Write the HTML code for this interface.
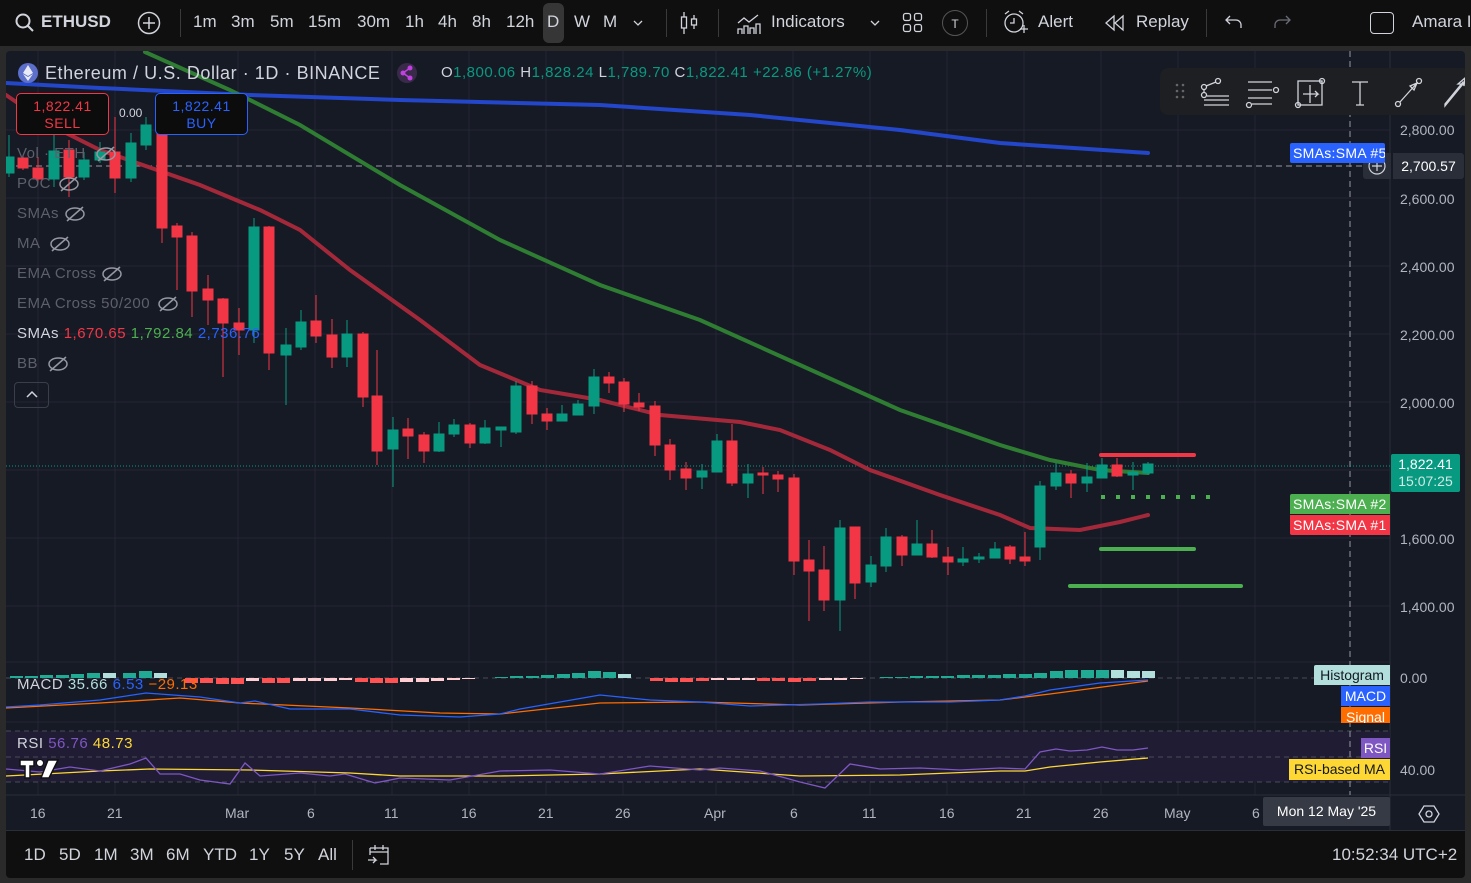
<!DOCTYPE html>
<html><head><meta charset="utf-8">
<style>
*{margin:0;padding:0;box-sizing:border-box}
body{width:1471px;height:883px;background:#2a2a2a;font-family:"Liberation Sans",sans-serif;overflow:hidden;position:relative;color:#d1d4dc}
.top{position:absolute;left:0;top:0;width:1471px;height:46px;background:#0f0f0f}
.t{position:absolute;font-size:17px;color:#d1d4dc;top:12px;white-space:nowrap}
.sep{position:absolute;top:9px;width:1px;height:28px;background:#3a3a3a}
.chart{position:absolute;left:6px;top:51px;width:1459px;height:779px;background:#161a25;border-radius:4px 4px 0 0;overflow:hidden}
.bot{position:absolute;left:6px;top:830px;width:1459px;height:48px;background:#0f0f0f;border-top:1px solid #2a2e39;border-radius:0 0 4px 4px}
.b{position:absolute;top:14px;font-size:17px;color:#d1d4dc}
svg text{font-family:"Liberation Sans",sans-serif}
</style></head><body>
<div class="top">
<svg style="position:absolute;left:14px;top:12px" width="22" height="22"><circle cx="9" cy="9" r="6.5" stroke="#d1d4dc" stroke-width="2" fill="none"/><line x1="14" y1="14" x2="19" y2="19" stroke="#d1d4dc" stroke-width="2"/></svg>
<span class="t" style="left:41px;font-weight:bold">ETHUSD</span>
<svg style="position:absolute;left:137px;top:11px" width="24" height="24"><circle cx="12" cy="12" r="10.5" stroke="#d1d4dc" stroke-width="1.5" fill="none"/><path d="M12 6v12M6 12h12" stroke="#d1d4dc" stroke-width="1.5"/></svg>
<div class="sep" style="left:180px"></div>
<span class="t" style="left:193px">1m</span><span class="t" style="left:231px">3m</span><span class="t" style="left:270px">5m</span><span class="t" style="left:308px">15m</span><span class="t" style="left:357px">30m</span><span class="t" style="left:405px">1h</span><span class="t" style="left:438px">4h</span><span class="t" style="left:472px">8h</span><span class="t" style="left:506px">12h</span>
<div style="position:absolute;left:543px;top:3px;width:21px;height:40px;background:#363636;border-radius:6px"></div>
<span class="t" style="left:547px">D</span><span class="t" style="left:574px">W</span><span class="t" style="left:603px">M</span>
<svg style="position:absolute;left:632px;top:18px" width="12" height="10"><path d="M2 3l4 4 4-4" stroke="#d1d4dc" stroke-width="1.3" fill="none"/></svg>
<div class="sep" style="left:666px"></div>
<svg style="position:absolute;left:678px;top:10px" width="22" height="26"><path d="M6 2v22M16 5v14" stroke="#d1d4dc" stroke-width="1.3"/><rect x="3.5" y="7" width="5" height="11" fill="#0f0f0f" stroke="#d1d4dc" stroke-width="1.3"/><rect x="13.5" y="9" width="5" height="6" fill="#0f0f0f" stroke="#d1d4dc" stroke-width="1.3"/></svg>
<div class="sep" style="left:718px"></div>
<svg style="position:absolute;left:736px;top:10px" width="26" height="26"><path d="M2 13l6-5 5 4 9-7" stroke="#d1d4dc" stroke-width="1.3" fill="none"/><path d="M2 24V19h4v5M8 24v-8h4v8M14 24v-6h4v6M20 24V14h4v10" stroke="#d1d4dc" stroke-width="1.3" fill="none"/></svg>
<span class="t" style="left:771px">Indicators</span>
<svg style="position:absolute;left:869px;top:18px" width="12" height="10"><path d="M2 3l4 4 4-4" stroke="#d1d4dc" stroke-width="1.3" fill="none"/></svg>
<svg style="position:absolute;left:902px;top:12px" width="22" height="22"><rect x="1.5" y="1.5" width="7" height="7" rx="2" stroke="#d1d4dc" fill="none" stroke-width="1.3"/><rect x="12.5" y="1.5" width="7" height="7" rx="2" stroke="#d1d4dc" fill="none" stroke-width="1.3"/><rect x="1.5" y="12.5" width="7" height="7" rx="2" stroke="#d1d4dc" fill="none" stroke-width="1.3"/><rect x="12.5" y="12.5" width="7" height="7" rx="2" stroke="#d1d4dc" fill="none" stroke-width="1.3"/></svg>
<svg style="position:absolute;left:941px;top:9px" width="28" height="28"><circle cx="14" cy="14" r="12.5" stroke="#555" fill="none"/><text x="14" y="19" font-size="12" fill="#d1d4dc" text-anchor="middle">T</text></svg>
<div class="sep" style="left:986px"></div>
<svg style="position:absolute;left:1002px;top:9px" width="28" height="28"><circle cx="12" cy="14" r="9" stroke="#d1d4dc" stroke-width="1.3" fill="none"/><path d="M12 9v5h-4M3 5l4-3M21 5l-4-3M18 20h8M22 16v8" stroke="#d1d4dc" stroke-width="1.3" fill="none"/></svg>
<span class="t" style="left:1038px">Alert</span>
<svg style="position:absolute;left:1103px;top:13px" width="24" height="20"><path d="M11 3L3 10l8 7zM20 3l-8 7 8 7z" stroke="#d1d4dc" stroke-width="1.3" fill="none"/></svg>
<span class="t" style="left:1136px">Replay</span>
<div class="sep" style="left:1206px"></div>
<svg style="position:absolute;left:1224px;top:13px" width="20" height="18"><path d="M6 3L2 7l4 4M2 7h10a5 5 0 0 1 5 5v3" stroke="#d1d4dc" stroke-width="1.3" fill="none"/></svg>
<svg style="position:absolute;left:1272px;top:13px" width="20" height="18"><path d="M14 3l4 4-4 4M18 7H8a5 5 0 0 0-5 5v3" stroke="#6a6d78" stroke-width="1.3" fill="none"/></svg>
<div style="position:absolute;left:1370px;top:12px;width:24px;height:22px;border:1.5px solid #d1d4dc;border-radius:4px"></div>
<span class="t" style="left:1412px">Amara I</span>
</div>

<div class="chart">
<svg width="1459" height="779" viewBox="6 51 1459 779" style="position:absolute;left:0;top:0">
<g stroke="#242733" stroke-width="1">
<path d="M6 130H1390M6 198H1390M6 266H1390M6 334H1390M6 402H1390M6 470H1390M6 538H1390M6 606H1390"/>
<path d="M38 51V795M115 51V795M238 51V795M315 51V795M392 51V795M469 51V795M546 51V795M623 51V795M716 51V795M793 51V795M870 51V795M947 51V795M1024 51V795M1101 51V795M1178 51V795M1255 51V795"/>
<path d="M6 662H1390M6 722H1390"/>
</g>
<line x1="1390" y1="51" x2="1390" y2="830" stroke="#2a2e39"/>
<line x1="6" y1="795" x2="1465" y2="795" stroke="#2a2e39"/>
<rect x="6" y="731" width="1384" height="51" fill="#1f1c33"/>
<g stroke="#4a4c58" stroke-dasharray="5 4"><path d="M6 731H1390M6 757H1390M6 782H1390"/></g>
<g stroke="#9598a1" stroke-dasharray="6 4" stroke-width="1"><path d="M6 166H1390M1350 51V795"/></g>
<line x1="6" y1="466" x2="1390" y2="466" stroke="#089981" stroke-dasharray="1 2"/>
<line x1="6" y1="678" x2="1390" y2="678" stroke="#4a4c58" stroke-dasharray="5 4"/>
<polyline fill="none" stroke="#2446c8" stroke-width="4" stroke-linecap="round" points="6,83 100,88 250,95 400,100 600,105 750,115 900,130 1000,143 1148,153"/>
<polyline fill="none" stroke="#2e7d32" stroke-width="4" stroke-linecap="round" points="145,52 230,90 300,125 400,185 500,240 600,285 700,320 800,365 900,410 1000,445 1050,460 1100,470 1148,473"/>
<polyline fill="none" stroke="#a3293a" stroke-width="4" stroke-linecap="round" points="6,95 50,125 100,150 200,185 260,210 300,230 350,270 420,320 480,365 540,390 600,400 660,415 740,422 780,430 830,450 870,470 940,495 1000,515 1030,528 1080,530 1120,522 1148,515"/>
<g stroke-width="1">
<g fill="#089981" stroke="#089981">
<path d="M9 135V177M54 135V187M84 152V180M100 142V163M131 133V182M146 117V150M254 218V343M286 328V405M301 310V350M347 320V367M393 417V487M439 422V452M454 419V437M485 420V444M501 427V447M516 381V434M562 405V421M578 400V415M594 369V414M702 464V489M717 434V472M748 464V498M840 520V631M871 556V587M886 528V572M917 520V555M963 547V566M979 553V563M995 542V558M1040 481V560M1056 463V490M1087 463V492M1102 458V478M1133 462V490M1148 462V475"/>
<rect x="4" y="157" width="10" height="16"/><rect x="49" y="151" width="10" height="28"/><rect x="79" y="160" width="10" height="17"/><rect x="95" y="152" width="10" height="8"/><rect x="126" y="143" width="10" height="35"/><rect x="141" y="125" width="10" height="20"/><rect x="249" y="227" width="10" height="103"/><rect x="281" y="345" width="10" height="10"/><rect x="296" y="322" width="10" height="25"/><rect x="342" y="334" width="10" height="23"/><rect x="388" y="430" width="10" height="19"/><rect x="434" y="434" width="10" height="17"/><rect x="449" y="425" width="10" height="9"/><rect x="480" y="428" width="10" height="15"/><rect x="496" y="427" width="10" height="3"/><rect x="511" y="386" width="10" height="46"/><rect x="557" y="414" width="10" height="7"/><rect x="573" y="404" width="10" height="11"/><rect x="589" y="377" width="10" height="29"/><rect x="697" y="471" width="10" height="6"/><rect x="712" y="441" width="10" height="31"/><rect x="743" y="474" width="10" height="9"/><rect x="835" y="528" width="10" height="72"/><rect x="866" y="565" width="10" height="17"/><rect x="881" y="537" width="10" height="29"/><rect x="912" y="544" width="10" height="11"/><rect x="958" y="559" width="10" height="3"/><rect x="974" y="557" width="10" height="2"/><rect x="990" y="549" width="10" height="9"/><rect x="1035" y="486" width="10" height="61"/><rect x="1051" y="473" width="10" height="13"/><rect x="1082" y="477" width="10" height="6"/><rect x="1097" y="465" width="10" height="13"/><rect x="1128" y="472" width="10" height="3"/><rect x="1143" y="464" width="10" height="9"/>
</g>
<g fill="#f23645" stroke="#f23645">
<path d="M23 155V170M38 157V183M69 140V197M115 117V193M162 120V243M177 223V290M192 232V317M208 275V325M223 298V377M239 308V355M269 226V370M316 295V343M332 319V368M363 332V407M377 350V465M408 418V459M424 432V463M470 423V448M532 381V424M547 408V430M609 372V393M624 378V412M639 393V411M655 401V456M670 439V480M686 462V490M732 424V486M763 467V494M778 471V492M794 474V575M809 540V621M824 546V611M855 527V599M902 535V566M932 530V558M948 547V575M1010 545V564M1025 532V566M1071 470V498M1117 458V477"/>
<rect x="18" y="158" width="10" height="10"/><rect x="33" y="168" width="10" height="11"/><rect x="64" y="150" width="10" height="27"/><rect x="110" y="152" width="10" height="26"/><rect x="157" y="125" width="10" height="103"/><rect x="172" y="226" width="10" height="11"/><rect x="187" y="236" width="10" height="55"/><rect x="203" y="289" width="10" height="11"/><rect x="218" y="299" width="10" height="24"/><rect x="234" y="323" width="10" height="7"/><rect x="264" y="227" width="10" height="126"/><rect x="311" y="321" width="10" height="15"/><rect x="327" y="335" width="10" height="22"/><rect x="358" y="334" width="10" height="63"/><rect x="372" y="396" width="10" height="55"/><rect x="403" y="429" width="10" height="7"/><rect x="419" y="435" width="10" height="16"/><rect x="465" y="425" width="10" height="18"/><rect x="527" y="386" width="10" height="28"/><rect x="542" y="414" width="10" height="7"/><rect x="604" y="377" width="10" height="6"/><rect x="619" y="382" width="10" height="22"/><rect x="634" y="403" width="10" height="4"/><rect x="650" y="406" width="10" height="39"/><rect x="665" y="445" width="10" height="25"/><rect x="681" y="469" width="10" height="9"/><rect x="727" y="441" width="10" height="42"/><rect x="758" y="473" width="10" height="2"/><rect x="773" y="475" width="10" height="4"/><rect x="789" y="478" width="10" height="83"/><rect x="804" y="560" width="10" height="11"/><rect x="819" y="570" width="10" height="30"/><rect x="850" y="527" width="10" height="56"/><rect x="897" y="537" width="10" height="18"/><rect x="927" y="544" width="10" height="13"/><rect x="943" y="557" width="10" height="5"/><rect x="1005" y="547" width="10" height="12"/><rect x="1020" y="557" width="10" height="4"/><rect x="1066" y="474" width="10" height="9"/><rect x="1112" y="465" width="10" height="11"/>
</g></g>
<g stroke-width="4" stroke-linecap="round">
<line x1="1101" y1="455" x2="1194" y2="455" stroke="#f23645"/>
<line x1="1101" y1="497" x2="1210" y2="497" stroke="#4caf50" stroke-dasharray="4 11" stroke-linecap="butt"/>
<line x1="1101" y1="549" x2="1194" y2="549" stroke="#4caf50"/>
<line x1="1070" y1="586" x2="1241" y2="586" stroke="#4caf50"/>
</g>
<g fill="#22ab94">
<rect x="10" y="676" width="13" height="2"/><rect x="25" y="676" width="13" height="2"/><rect x="40" y="675" width="13" height="3"/><rect x="56" y="675" width="13" height="3"/><rect x="71" y="674" width="13" height="4"/><rect x="87" y="673" width="13" height="5"/><rect x="123" y="673" width="13" height="5"/><rect x="139" y="671" width="13" height="7"/>
<rect x="495" y="677" width="13" height="1"/><rect x="510" y="676" width="13" height="2"/><rect x="526" y="676" width="13" height="2"/><rect x="541" y="675" width="13" height="3"/><rect x="557" y="674" width="13" height="4"/><rect x="572" y="673" width="13" height="5"/><rect x="588" y="671" width="13" height="7"/><rect x="603" y="672" width="13" height="6"/>
<rect x="880" y="677" width="13" height="1"/><rect x="895" y="677" width="13" height="1"/><rect x="910" y="676" width="13" height="2"/><rect x="926" y="676" width="13" height="2"/><rect x="941" y="676" width="13" height="2"/><rect x="957" y="675" width="13" height="3"/><rect x="972" y="675" width="13" height="3"/><rect x="988" y="675" width="13" height="3"/><rect x="1003" y="674" width="13" height="4"/><rect x="1019" y="674" width="13" height="4"/><rect x="1034" y="673" width="13" height="5"/><rect x="1050" y="671" width="13" height="7"/><rect x="1065" y="670" width="13" height="8"/><rect x="1081" y="670" width="13" height="8"/><rect x="1096" y="670" width="13" height="8"/>
</g>
<g fill="#b2dfdb"><rect x="103" y="673" width="13" height="5"/><rect x="154" y="673" width="13" height="5"/><rect x="1111" y="670" width="13" height="8"/><rect x="1127" y="671" width="13" height="7"/><rect x="1142" y="671" width="13" height="7"/><rect x="618" y="674" width="13" height="4"/></g>
<g fill="#ff5252"><rect x="185" y="678" width="13" height="5"/><rect x="200" y="678" width="13" height="5"/><rect x="216" y="678" width="13" height="6"/><rect x="231" y="678" width="13" height="6"/><rect x="262" y="678" width="13" height="5"/><rect x="277" y="678" width="13" height="5"/><rect x="355" y="678" width="13" height="4"/><rect x="370" y="678" width="13" height="5"/><rect x="385" y="678" width="13" height="5"/><rect x="650" y="678" width="13" height="3"/><rect x="665" y="678" width="13" height="4"/><rect x="680" y="678" width="13" height="4"/><rect x="696" y="678" width="13" height="3"/><rect x="757" y="678" width="13" height="3"/><rect x="772" y="678" width="13" height="3"/><rect x="788" y="678" width="13" height="4"/><rect x="803" y="678" width="13" height="3"/></g>
<g fill="#ffcdd2"><rect x="246" y="678" width="13" height="3"/><rect x="293" y="678" width="13" height="3"/><rect x="308" y="678" width="13" height="3"/><rect x="324" y="678" width="13" height="3"/><rect x="339" y="678" width="13" height="2"/><rect x="400" y="678" width="13" height="4"/><rect x="416" y="678" width="13" height="4"/><rect x="431" y="678" width="13" height="3"/><rect x="447" y="678" width="13" height="2"/><rect x="462" y="678" width="13" height="1"/><rect x="711" y="678" width="13" height="2"/><rect x="727" y="678" width="13" height="2"/><rect x="742" y="678" width="13" height="2"/><rect x="819" y="678" width="13" height="2"/><rect x="834" y="678" width="13" height="2"/><rect x="850" y="678" width="13" height="1"/></g>
<polyline fill="none" stroke="#ff6d00" stroke-width="1.3" points="6,708 100,703 180,698 240,703 350,708 440,713 500,714 600,703 700,702 800,705 900,702 1000,700 1050,694 1148,681"/>
<polyline fill="none" stroke="#2962ff" stroke-width="1.3" points="6,707 40,705 100,700 146,693 200,697 240,703 255,701 290,709 350,709 400,715 460,717 500,714 520,709 600,695 650,700 700,702 750,706 820,704 870,702 950,702 1000,700 1025,696 1050,690 1100,683 1148,680"/>
<polyline fill="none" stroke="#fdd835" stroke-width="1.3" points="6,776 100,771 150,769 250,770 350,773 400,776 500,776 600,774 700,769 800,776 900,775 1000,771 1025,771 1050,767 1100,762 1148,758"/>
<polyline fill="none" stroke="#7e57c2" stroke-width="1.3" points="6,769 40,772 70,767 100,771 130,764 146,758 160,774 180,774 200,780 230,784 245,763 260,776 300,773 330,776 345,774 375,783 400,778 450,780 500,771 550,770 600,774 650,766 700,770 720,768 760,771 800,782 825,788 850,764 880,769 920,768 960,770 1000,768 1025,769 1040,752 1056,749 1070,751 1087,750 1102,747 1117,750 1133,750 1148,748"/>
<g transform="translate(20,758)"><path d="M0 2h14v6h-4v12H5V8H0z" fill="#fff" stroke="#111" stroke-width="1.5"/><circle cx="20" cy="5" r="3.5" fill="#fff" stroke="#111" stroke-width="1"/><path d="M28 2h10l-9 18h-8z" fill="#fff" stroke="#111" stroke-width="1.5"/></g>
</svg>

<svg style="position:absolute;left:11px;top:11px" width="22" height="22"><circle cx="11" cy="11" r="10" fill="#5c6fcb"/><path d="M11 3l-5 8 5 3 5-3zM6 12l5 7 5-7-5 3z" fill="#e8eaf6"/></svg>
<div style="position:absolute;left:39px;top:12px;font-size:18px;color:#d1d4dc;letter-spacing:0.55px;white-space:nowrap">Ethereum / U.S. Dollar · 1D · BINANCE</div>
<svg style="position:absolute;left:390px;top:11px" width="22" height="22"><circle cx="11" cy="11" r="10" fill="#3a2a4a"/><circle cx="7" cy="11" r="2.5" fill="#c040e0"/><circle cx="14" cy="6" r="2.5" fill="#c040e0"/><circle cx="14" cy="16" r="2.5" fill="#c040e0"/><path d="M7 11l7-5M7 11l7 5" stroke="#c040e0" stroke-width="1.5"/></svg>
<div style="position:absolute;left:435px;top:13px;font-size:15px;letter-spacing:0.5px;color:#089981;white-space:nowrap"><span style="color:#d1d4dc">O</span>1,800.06 <span style="color:#d1d4dc">H</span>1,828.24 <span style="color:#d1d4dc">L</span>1,789.70 <span style="color:#d1d4dc">C</span>1,822.41 +22.86 (+1.27%)</div>
<div style="position:absolute;left:10px;top:42px;width:93px;height:42px;background:#0c0c0c;border:1.3px solid #f23645;border-radius:5px;color:#f23645;text-align:center;font-size:14px;line-height:17px;padding-top:4px;letter-spacing:0.5px">1,822.41<br>SELL</div>
<div style="position:absolute;left:113px;top:55px;font-size:12px;color:#d1d4dc">0.00</div>
<div style="position:absolute;left:149px;top:42px;width:93px;height:42px;background:#0c0c0c;border:1.3px solid #2962ff;border-radius:5px;color:#2962ff;text-align:center;font-size:14px;line-height:17px;padding-top:4px;letter-spacing:0.5px">1,822.41<br>BUY</div>
<div style="position:absolute;left:11px;top:88px;font-size:15px;letter-spacing:0.5px;color:#5d606b;line-height:30px;white-space:nowrap">Vol · ETH<br>POC<br>SMAs<br>MA<br>EMA Cross<br>EMA Cross 50/200<br><span style="color:#d1d4dc">SMAs</span> <span style="color:#f23645">1,670.65</span> <span style="color:#4caf50">1,792.84</span> <span style="color:#2962ff">2,736.76</span><br>BB</div>
<svg style="position:absolute;left:0;top:88px" width="180" height="240" fill="none" stroke="#9598a1" stroke-width="1.5">
<g><ellipse cx="100" cy="15" rx="9" ry="6"/><path d="M92 22l16-14"/></g>
<g><ellipse cx="63" cy="45" rx="9" ry="6"/><path d="M55 52l16-14"/></g>
<g><ellipse cx="69" cy="75" rx="9" ry="6"/><path d="M61 82l16-14"/></g>
<g><ellipse cx="54" cy="105" rx="9" ry="6"/><path d="M46 112l16-14"/></g>
<g><ellipse cx="106" cy="135" rx="9" ry="6"/><path d="M98 142l16-14"/></g>
<g><ellipse cx="162" cy="165" rx="9" ry="6"/><path d="M154 172l16-14"/></g>
<g><ellipse cx="52" cy="225" rx="9" ry="6"/><path d="M44 232l16-14"/></g>
</svg>
<div style="position:absolute;left:8px;top:331px;width:35px;height:26px;border:1px solid #3a3e4a;border-radius:4px"></div>
<svg style="position:absolute;left:19px;top:339px" width="14" height="10"><path d="M2 7l5-5 5 5" stroke="#d1d4dc" stroke-width="1.5" fill="none"/></svg>

<div style="position:absolute;left:11px;top:625px;font-size:15px;letter-spacing:0.5px;color:#d1d4dc;white-space:nowrap">MACD <span style="color:#b2dfdb">35.66</span> <span style="color:#2962ff">6.53</span> <span style="color:#ff6d00">−29.13</span></div>
<div style="position:absolute;left:11px;top:684px;font-size:15px;letter-spacing:0.5px;color:#d1d4dc;white-space:nowrap">RSI <span style="color:#7e57c2">56.76</span> <span style="color:#fdd835">48.73</span></div>

<div style="position:absolute;left:1154px;top:17px;width:310px;height:47px;background:#1e1f22;border-radius:8px"></div>
<svg style="position:absolute;left:1154px;top:17px" width="310" height="47" fill="none" stroke="#d1d4dc" stroke-width="1.3">
<g fill="#666" stroke="none"><circle cx="17" cy="17" r="1.3"/><circle cx="23" cy="17" r="1.3"/><circle cx="17" cy="23" r="1.3"/><circle cx="23" cy="23" r="1.3"/><circle cx="17" cy="29" r="1.3"/><circle cx="23" cy="29" r="1.3"/></g>
<circle cx="44" cy="19" r="2.5"/><circle cx="58" cy="13" r="2.5"/><circle cx="44" cy="27" r="2.5"/><path d="M46 18l10-4M44 21v4M47 28h22M44 32h25M44 37h25"/>
<path d="M88 14h24M88 22h24M88 30h24M92 36h20"/><circle cx="116" cy="22" r="2.5"/><circle cx="89" cy="37" r="2.5"/>
<rect x="138" y="13" width="24" height="24"/><circle cx="162" cy="13" r="2.5"/><circle cx="138" cy="37" r="2.5"/><path d="M150 17v18M143 26h15l-3-3M155 29l3-3"/>
<path d="M192 14h16M200 14v23M196 37h8"/>
<circle cx="238" cy="36" r="2.5"/><circle cx="259" cy="13" r="2.5"/><path d="M240 34l17-19M257 15l-3 7-4-4z"/>
<path d="M285 38l18-22-5 0 7-6-1 8 -1-4-18 22z"/>
</svg>

<div style="position:absolute;left:1394px;top:72px;font-size:14px;color:#b2b5be;line-height:1;white-space:nowrap">2,800.00</div>
<div style="position:absolute;left:1394px;top:140px;font-size:14px;color:#b2b5be">2,600.00</div>
<div style="position:absolute;left:1394px;top:208px;font-size:14px;color:#b2b5be">2,400.00</div>
<div style="position:absolute;left:1394px;top:276px;font-size:14px;color:#b2b5be">2,200.00</div>
<div style="position:absolute;left:1394px;top:344px;font-size:14px;color:#b2b5be">2,000.00</div>
<div style="position:absolute;left:1394px;top:480px;font-size:14px;color:#b2b5be">1,600.00</div>
<div style="position:absolute;left:1394px;top:548px;font-size:14px;color:#b2b5be">1,400.00</div>
<div style="position:absolute;left:1394px;top:619px;font-size:14px;color:#b2b5be">0.00</div>
<div style="position:absolute;left:1394px;top:711px;font-size:14px;color:#b2b5be">40.00</div>
<div style="position:absolute;left:1357px;top:102px;width:28px;height:26px;background:#2a2e39;border-radius:3px 0 0 3px"></div>
<svg style="position:absolute;left:1361px;top:105px" width="20" height="20"><circle cx="10" cy="10" r="8" stroke="#d1d4dc" fill="none" stroke-width="1.2"/><path d="M10 5v10M5 10h10" stroke="#d1d4dc" stroke-width="1.2"/></svg>
<div style="position:absolute;left:1387px;top:102px;width:71px;height:26px;background:#2a2e39;border-radius:0 3px 3px 0;color:#fff;font-size:14px;text-align:center;line-height:26px">2,700.57</div>
<div style="position:absolute;left:1284px;top:92px;width:95px;height:20px;background:#2962ff;color:#fff;font-size:14px;line-height:20px;padding-left:3px;border-radius:2px;overflow:hidden;white-space:nowrap;letter-spacing:0.3px">SMAs:SMA #5</div>
<div style="position:absolute;left:1385px;top:403px;width:69px;height:38px;background:#089981;border-radius:2px;color:#fff;font-size:14px;text-align:center;line-height:17px;padding-top:2px">1,822.41<br><span style="color:#cfe9e4">15:07:25</span></div>
<div style="position:absolute;left:1284px;top:443px;width:100px;height:20px;background:#4caf50;color:#fff;font-size:14px;line-height:20px;padding-left:3px;border-radius:2px 0 0 0;letter-spacing:0.3px">SMAs:SMA #2</div>
<div style="position:absolute;left:1284px;top:464px;width:100px;height:20px;background:#f23645;color:#fff;font-size:14px;line-height:20px;padding-left:3px;border-radius:0 0 0 2px;letter-spacing:0.3px">SMAs:SMA #1</div>
<div style="position:absolute;left:1308px;top:614px;width:76px;height:20px;background:#b2dfdb;color:#131722;font-size:14px;line-height:20px;text-align:center;border-radius:2px 0 0 0">Histogram</div>
<div style="position:absolute;left:1335px;top:635px;width:49px;height:20px;background:#2962ff;color:#fff;font-size:14px;line-height:20px;text-align:center">MACD</div>
<div style="position:absolute;left:1335px;top:656px;width:49px;height:16px;background:#ff6d00;color:#fff;font-size:14px;line-height:20px;text-align:center;overflow:hidden">Signal</div>
<div style="position:absolute;left:1355px;top:687px;width:29px;height:20px;background:#7e57c2;color:#fff;font-size:14px;line-height:20px;text-align:center">RSI</div>
<div style="position:absolute;left:1283px;top:708px;width:101px;height:21px;background:#fdd835;color:#131722;font-size:14px;line-height:21px;text-align:center">RSI-based MA</div>

<div style="position:absolute;top:754px;left:0;width:1459px;font-size:14px;color:#b2b5be">
<span style="position:absolute;left:24px">16</span><span style="position:absolute;left:101px">21</span><span style="position:absolute;left:219px">Mar</span><span style="position:absolute;left:301px">6</span><span style="position:absolute;left:378px">11</span><span style="position:absolute;left:455px">16</span><span style="position:absolute;left:532px">21</span><span style="position:absolute;left:609px">26</span><span style="position:absolute;left:698px">Apr</span><span style="position:absolute;left:784px">6</span><span style="position:absolute;left:856px">11</span><span style="position:absolute;left:933px">16</span><span style="position:absolute;left:1010px">21</span><span style="position:absolute;left:1087px">26</span><span style="position:absolute;left:1158px">May</span><span style="position:absolute;left:1246px">6</span></div>
<div style="position:absolute;left:1257px;top:746px;width:127px;height:29px;background:#363a45;border-radius:2px;color:#fff;font-size:14px;line-height:29px;text-align:center">Mon 12 May '25</div>
<svg style="position:absolute;left:1412px;top:752px" width="22" height="22"><path d="M6 3h10l5 8-5 8H6l-5-8z" fill="none" stroke="#d1d4dc" stroke-width="1.3"/><circle cx="11" cy="11" r="3" fill="none" stroke="#d1d4dc" stroke-width="1.3"/></svg>
</div>

<div class="bot">
<span class="b" style="left:18px">1D</span><span class="b" style="left:53px">5D</span><span class="b" style="left:88px">1M</span><span class="b" style="left:124px">3M</span><span class="b" style="left:160px">6M</span><span class="b" style="left:197px">YTD</span><span class="b" style="left:243px">1Y</span><span class="b" style="left:278px">5Y</span><span class="b" style="left:312px">All</span>
<div style="position:absolute;left:346px;top:9px;width:1px;height:30px;background:#3a3a3a"></div>
<svg style="position:absolute;left:360px;top:11px" width="26" height="26"><path d="M4 6h18v16h-8M4 6v7M4 10h18M9 3v5M17 3v5M2 18h8l-3-3M10 18l-3 3" fill="none" stroke="#d1d4dc" stroke-width="1.3"/></svg>
<span class="b" style="left:1326px">10:52:34 UTC+2</span>
</div>
</body></html>
